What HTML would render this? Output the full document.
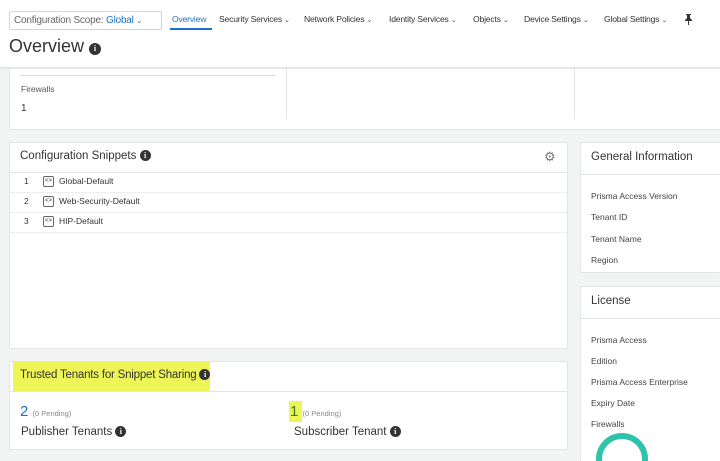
<!DOCTYPE html>
<html><head><style>
*{box-sizing:border-box;margin:0;padding:0}
html,body{width:720px;height:461px;overflow:hidden}
body{background:#f2f3f3;font-family:"Liberation Sans",sans-serif;color:#333;position:relative}
.a{position:absolute;white-space:nowrap}
.card{position:absolute;background:#fff;border:1px solid #e4e6e6;border-radius:2px}
.info{display:inline-block;width:11px;height:11px;border-radius:50%;background:#333;color:#fff;font-size:8px;font-weight:bold;text-align:center;line-height:11px;vertical-align:1px;font-family:"Liberation Serif",serif}
.tab{position:absolute;top:14px;font-size:8.6px;color:#333;letter-spacing:-0.2px}
.ch{font-size:7px;color:#555}
.hl{background:#eef556}
</style></head><body>
<div class="a" style="left:0;top:0;width:720px;height:68px;background:#fff;border-bottom:1px solid #e2e4e4;box-shadow:0 1px 2px rgba(0,0,0,.06)"></div>
<div class="a" style="left:9px;top:11px;width:153px;height:19px;border:1px solid #d4d6d6;border-radius:2px;font-size:10px;color:#666;padding:3px 4px;letter-spacing:-0.2px">Configuration Scope: <span style="color:#1a73c8">Global</span> <span class="ch">&#8964;</span></div>
<div class="tab" style="left:172px;color:#1a73c8">Overview</div>
<div class="a" style="left:170px;top:28px;width:42px;height:2px;background:#1a73c8"></div>
<div class="tab" style="left:219px">Security Services <span class="ch">⌄</span></div>
<div class="tab" style="left:304px">Network Policies <span class="ch">⌄</span></div>
<div class="tab" style="left:389px">Identity Services <span class="ch">⌄</span></div>
<div class="tab" style="left:473px">Objects <span class="ch">⌄</span></div>
<div class="tab" style="left:524px">Device Settings <span class="ch">⌄</span></div>
<div class="tab" style="left:604px">Global Settings <span class="ch">⌄</span></div>
<svg class="a" style="left:684px;top:14px" width="9" height="11" viewBox="0 0 9 11"><path d="M2 0h5v1H6v3l2 2v1H5v4H4V7H1V6l2-2V1H2z" fill="#333"/></svg>
<div class="a" style="left:9px;top:36px;font-size:18px;color:#333">Overview <span class="info" style="width:12px;height:12px;line-height:12px">i</span></div>

<div class="card" style="left:9px;top:69px;width:711px;height:61px;border-top:none;border-right:none"></div>
<div class="a" style="left:20px;top:75px;width:255px;height:1px;background:#ddd"></div>
<div class="a" style="left:21px;top:84px;font-size:8.5px;color:#555">Firewalls</div>
<div class="a" style="left:21px;top:103px;font-size:10px">1</div>
<div class="a" style="left:286px;top:69px;width:1px;height:50px;background:#e2e2e2"></div>
<div class="a" style="left:574px;top:69px;width:1px;height:50px;background:#e2e2e2"></div>

<div class="card" style="left:9px;top:142px;width:559px;height:207px"></div>
<div class="a" style="left:20px;top:150px;font-size:11.5px">Configuration Snippets <span class="info">i</span></div>
<div class="a" style="left:544px;top:149px;font-size:13px;color:#777">⚙</div>
<div class="a" style="left:10px;top:172px;width:557px;height:1px;background:#e4e6e6"></div>
<div class="a" style="left:10px;top:192px;width:557px;height:1px;background:#eee"></div>
<div class="a" style="left:10px;top:212px;width:557px;height:1px;background:#eee"></div>
<div class="a" style="left:10px;top:232px;width:557px;height:1px;background:#eee"></div>
<div class="a" style="left:24px;top:176px;font-size:8.5px;line-height:10px">1<br><br>2<br><br>3</div>
<div class="a" style="left:43px;top:176px;width:11px;height:11px;border:1px solid #666;border-radius:2px;font-size:6px;text-align:center;line-height:9px">&lt;&gt;</div>
<div class="a" style="left:43px;top:196px;width:11px;height:11px;border:1px solid #666;border-radius:2px;font-size:6px;text-align:center;line-height:9px">&lt;&gt;</div>
<div class="a" style="left:43px;top:216px;width:11px;height:11px;border:1px solid #666;border-radius:2px;font-size:6px;text-align:center;line-height:9px">&lt;&gt;</div>
<div class="a" style="left:59px;top:176px;font-size:8.5px">Global-Default</div>
<div class="a" style="left:59px;top:196px;font-size:8.5px">Web-Security-Default</div>
<div class="a" style="left:59px;top:216px;font-size:8.5px">HIP-Default</div>

<div class="card" style="left:9px;top:361px;width:559px;height:89px"></div>
<div class="a hl" style="left:13px;top:362px;width:197px;height:29px"></div>
<div class="a" style="left:20px;top:369px;font-size:11.5px;letter-spacing:-0.2px">Trusted Tenants for Snippet Sharing <span class="info">i</span></div>
<div class="a" style="left:10px;top:391px;width:557px;height:1px;background:#e4e6e6"></div>
<div class="a" style="left:20px;top:403px;font-size:15px;color:#1a73c8">2 <span style="font-size:7.5px;color:#888">(0 Pending)</span></div>
<div class="a hl" style="left:289px;top:401px;width:13px;height:21px"></div>
<div class="a" style="left:290px;top:403px;font-size:15px;color:#3a7a20">1 <span style="font-size:7.5px;color:#888">(0 Pending)</span></div>
<div class="a" style="left:21px;top:426px;font-size:11.5px">Publisher Tenants <span class="info">i</span></div>
<div class="a" style="left:294px;top:426px;font-size:11.5px">Subscriber Tenant <span class="info">i</span></div>

<div class="card" style="left:580px;top:142px;width:140px;height:131px;border-right:none"></div>
<div class="a" style="left:591px;top:151px;font-size:11.5px">General Information</div>
<div class="a" style="left:581px;top:174px;width:139px;height:1px;background:#e4e6e6"></div>
<div class="a" style="left:591px;top:186px;font-size:8.5px;line-height:21.3px;color:#444">Prisma Access Version<br>Tenant ID<br>Tenant Name<br>Region</div>

<div class="card" style="left:580px;top:286px;width:140px;height:175px;border-right:none;border-bottom:none;overflow:hidden">
  <div style="position:absolute;left:15px;top:146px;width:52px;height:52px;border:6px solid #2dc3ac;border-radius:50%"></div>
</div>
<div class="a" style="left:591px;top:295px;font-size:11.5px">License</div>
<div class="a" style="left:581px;top:318px;width:139px;height:1px;background:#e4e6e6"></div>
<div class="a" style="left:591px;top:330px;font-size:8.5px;line-height:21px;color:#444">Prisma Access<br>Edition<br>Prisma Access Enterprise<br>Expiry Date<br>Firewalls</div>
</body></html>
